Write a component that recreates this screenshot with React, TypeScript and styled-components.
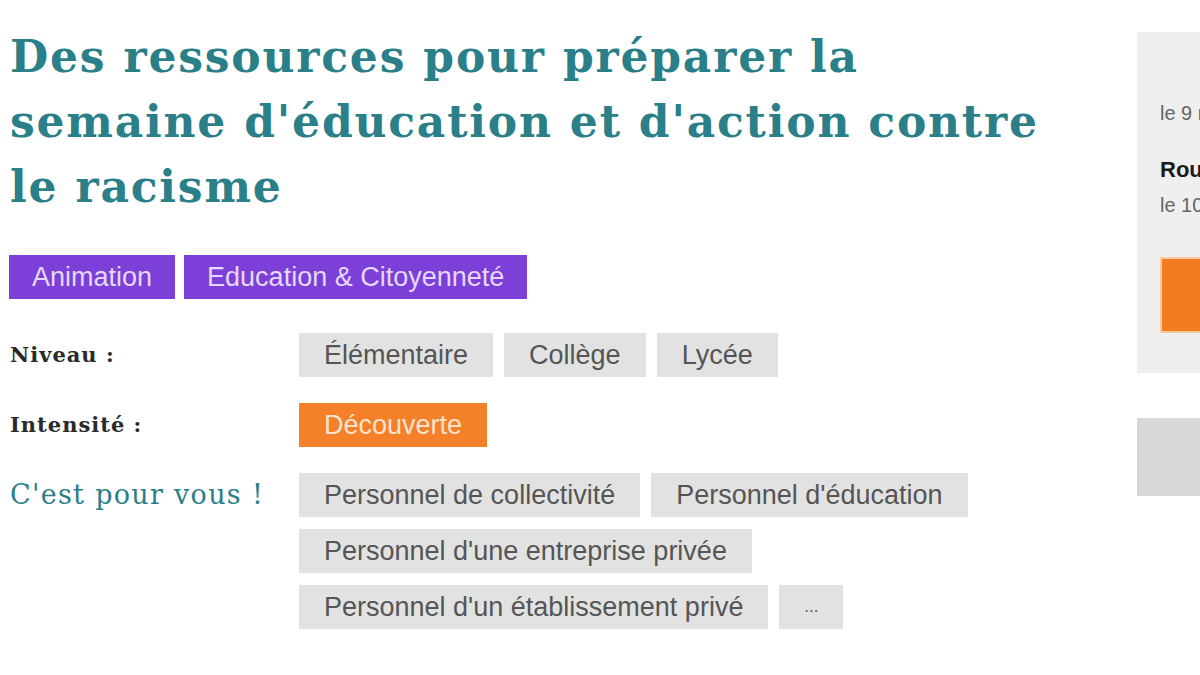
import styled, { createGlobalStyle } from 'styled-components';

const GlobalStyle = createGlobalStyle`
    html, body {
        margin: 0;
        padding: 0;
        background: #fff;
        overflow: hidden;
    }
`

const Page = styled.div`
    display: grid;
    grid-template-columns: 1137px 1fr;
    width: 1200px;
    height: 675px;
    overflow: hidden;
`

const Main = styled.main`
    padding: 24px 0 0 10px;
`

const Title = styled.h1`
    margin: 0;
    font-family: "DejaVu Serif", serif;
    font-weight: bold;
    font-size: 44px;
    line-height: 65px;
    color: #2a7f88;
    letter-spacing: 1.8px;
    white-space: nowrap;
`

const Themes = styled.div`
    display: flex;
    gap: 9px;
    margin: 36px 0 0 -1px;
`

const Tag = styled.span<{ $tone?: 'purple' | 'orange' | 'grey'; $small?: boolean }>`
    display: inline-flex;
    align-items: center;
    justify-content: center;
    height: 44px;
    padding: 0 ${p => p.$small ? 0 : p.$tone === 'purple' ? 23 : 25}px;
    min-width: ${p => p.$small ? '64px' : 'auto'};
    box-sizing: border-box;
    font-family: "Liberation Sans", Arial, sans-serif;
    font-size: ${p => p.$small ? '17px' : '27px'};
    white-space: nowrap;
    background: ${p => p.$tone === 'purple' ? '#7c40d8' : p.$tone === 'orange' ? '#f4812a' : '#e2e2e2'};
    color: ${p => p.$tone === 'purple' ? '#e6d8ff' : p.$tone === 'orange' ? '#fde3cf' : '#555'};
`

const Criteria = styled.div`
    display: grid;
    grid-template-columns: 289px 1fr;
    row-gap: 26px;
    margin-top: 34px;
`

const Label = styled.div<{ $accent?: boolean }>`
    font-family: "DejaVu Serif", serif;
    font-weight: ${p => p.$accent ? 'normal' : 'bold'};
    font-size: ${p => p.$accent ? '27px' : '21px'};
    letter-spacing: ${p => p.$accent ? '1.3px' : '1px'};
    line-height: 44px;
    color: ${p => p.$accent ? '#2a7f88' : '#2a2a2a'};
    white-space: nowrap;
`

const TagList = styled.div`
    display: flex;
    flex-wrap: wrap;
    gap: 12px 11px;
    max-width: 700px;
`

const Sidebar = styled.aside`
    display: flex;
    flex-direction: column;
    gap: 45px;
    padding-top: 32px;
`

const Panel = styled.div`
    background: #efefef;
    padding: 69px 0 0 23px;
    height: 341px;
    box-sizing: border-box;
    font-family: "Liberation Sans", Arial, sans-serif;
`

const EventDate = styled.div`
    font-size: 20px;
    color: #666;
    line-height: 24px;
    white-space: nowrap;
`

const EventPlace = styled.div`
    font-size: 22px;
    font-weight: bold;
    color: #1a1a1a;
    margin-top: 33px;
    line-height: 24px;
    white-space: nowrap;
    & + ${EventDate} {
        margin-top: 11px;
    }
`

const Register = styled.div`
    margin-top: 40px;
    height: 76px;
    width: 300px;
    background: #f47c20;
    border: 2px solid #fbc9a0;
    box-sizing: border-box;
`

const GreyBox = styled.div`
    background: #d8d8d8;
    height: 78px;
`

const App = () => {
    return (
        <>
            <GlobalStyle />
            <Page>
                <Main>
                    <Title>
                        Des ressources pour préparer la<br />
                        semaine d'éducation et d'action contre<br />
                        le racisme
                    </Title>
                    <Themes>
                        <Tag $tone="purple">Animation</Tag>
                        <Tag $tone="purple">Education &amp; Citoyenneté</Tag>
                    </Themes>
                    <Criteria>
                        <Label>Niveau :</Label>
                        <TagList>
                            <Tag>Élémentaire</Tag>
                            <Tag>Collège</Tag>
                            <Tag>Lycée</Tag>
                        </TagList>
                        <Label>Intensité :</Label>
                        <TagList>
                            <Tag $tone="orange">Découverte</Tag>
                        </TagList>
                        <Label $accent>C'est pour vous !</Label>
                        <TagList>
                            <Tag>Personnel de collectivité</Tag>
                            <Tag>Personnel d'éducation</Tag>
                            <Tag>Personnel d'une entreprise privée</Tag>
                            <Tag>Personnel d'un établissement privé</Tag>
                            <Tag $small>...</Tag>
                        </TagList>
                    </Criteria>
                </Main>
                <Sidebar>
                    <Panel>
                        <EventDate>le 9 mars 2021</EventDate>
                        <EventPlace>Rouen</EventPlace>
                        <EventDate>le 10 mars 2021</EventDate>
                        <Register />
                    </Panel>
                    <GreyBox />
                </Sidebar>
            </Page>
        </>
    )
}

export default App
